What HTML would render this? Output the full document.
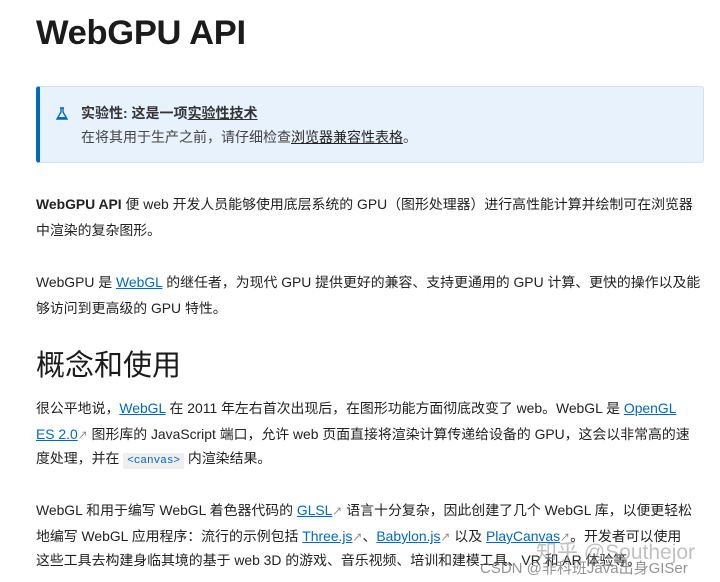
<!DOCTYPE html>
<html><head><meta charset="utf-8"><style>
body{margin:0;background:#fff;width:720px;height:582px;overflow:hidden;font-family:"Liberation Sans","Noto Sans CJK SC",sans-serif;color:#1b1b1b;}
.w{position:absolute;left:36px;white-space:nowrap;font-size:13.9px;color:#222;}
h1{position:absolute;left:36px;top:14px;margin:0;font-size:34.5px;font-weight:700;letter-spacing:-0.3px;}
h2{position:absolute;left:36px;top:342px;margin:0;font-size:29px;font-weight:400;}
.note{position:absolute;left:36px;top:86px;width:668px;height:77px;background:#e8f2fd;border:1px solid #d3e1f0;border-left:4px solid #0069c2;border-radius:3px;box-sizing:border-box;}
a{color:#0069c2;text-decoration:underline;}
.ext{font-size:10px;color:#777;}
code{font-family:"Liberation Mono",monospace;font-size:11px;background:#eee;padding:2px 4px;color:#0069c2;}
.wm{position:absolute;color:rgba(150,150,150,0.6);white-space:nowrap;}
</style></head><body>
<h1>WebGPU API</h1>
<div class="note">
<svg style="position:absolute;left:16px;top:20px" width="12" height="14" viewBox="0 0 12 14"><path d="M4 1h4M5 1v4L1 12h10L7 5V1" fill="none" stroke="#0069c2" stroke-width="1.4"/><path d="M2.5 10h7l1 2h-9z" fill="#0069c2"/></svg>
<div style="position:absolute;left:41px;top:16px;font-size:14px;font-weight:700;color:#333">实验性: 这是一项<span style="text-decoration:underline">实验性技术</span></div>
<div style="position:absolute;left:41px;top:40px;font-size:14px;color:#444">在将其用于生产之前，请仔细检查<span style="text-decoration:underline;color:#222">浏览器兼容性表格</span>。</div>
</div>
<div class="w" style="top:194px"><b>WebGPU API</b> 便 web 开发人员能够使用底层系统的 GPU（图形处理器）进行高性能计算并绘制可在浏览器</div>
<div class="w" style="top:220px">中渲染的复杂图形。</div>
<div class="w" style="top:272px">WebGPU 是 <a>WebGL</a> 的继任者，为现代 GPU 提供更好的兼容、支持更通用的 GPU 计算、更快的操作以及能</div>
<div class="w" style="top:298px">够访问到更高级的 GPU 特性。</div>
<h2>概念和使用</h2>
<div class="w" style="top:398px">很公平地说，<a>WebGL</a> 在 2011 年左右首次出现后，在图形功能方面彻底改变了 web。WebGL 是 <a>OpenGL</a></div>
<div class="w" style="top:424px"><a>ES 2.0</a><span class="ext">↗</span> 图形库的 JavaScript 端口，允许 web 页面直接将渲染计算传递给设备的 GPU，这会以非常高的速</div>
<div class="w" style="top:448px">度处理，并在 <code>&lt;canvas&gt;</code> 内渲染结果。</div>
<div class="w" style="top:500px">WebGL 和用于编写 WebGL 着色器代码的 <a>GLSL</a><span class="ext">↗</span> 语言十分复杂，因此创建了几个 WebGL 库，以便更轻松</div>
<div class="w" style="top:526px">地编写 WebGL 应用程序：流行的示例包括 <a>Three.js</a><span class="ext">↗</span>、<a>Babylon.js</a><span class="ext">↗</span> 以及 <a>PlayCanvas</a><span class="ext">↗</span>。开发者可以使用</div>
<div class="w" style="top:550px">这些工具去构建身临其境的基于 web 3D 的游戏、音乐视频、培训和建模工具、VR 和 AR 体验等。</div>
<div class="wm" style="left:536px;top:536px;font-size:21px">知乎 @Southejor</div>
<div class="wm" style="left:480px;top:557px;font-size:15px;color:rgba(120,120,120,0.8)">CSDN @非科班Java出身GISer</div>
</body></html>
